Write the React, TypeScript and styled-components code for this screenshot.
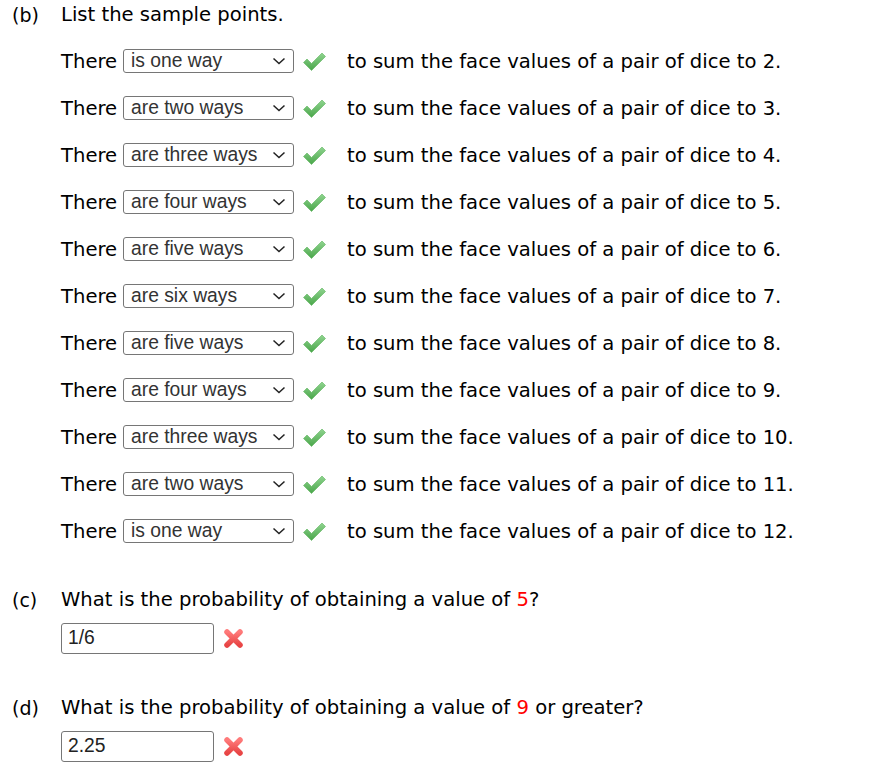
import styled, { createGlobalStyle } from "styled-components";

const GlobalStyle = createGlobalStyle`
    body {
        margin: 0;
        background: #ffffff;
        font-family: "DejaVu Sans", Verdana, sans-serif;
        color: #000000;
    }
`;

const Page = styled.div`
    padding: 1px 0 0 12px;
    width: 865px;
`;

const Part = styled.div<{ $top: number }>`
    display: flex;
    margin-top: ${(p) => p.$top}px;
`;

const PartLabel = styled.div`
    width: 49px;
    font-size: 19px;
    line-height: 28px;
    flex-shrink: 0;
`;

const PartBody = styled.div`
    display: flex;
    flex-direction: column;
`;

const Question = styled.div`
    font-size: 19.6px;
    line-height: 28px;
`;

const Red = styled.span`
    color: #ff0000;
`;

const RowList = styled.div`
    margin-top: 8.5px;
    display: flex;
    flex-direction: column;
`;

const Row = styled.div`
    height: 47px;
    display: flex;
    align-items: center;
    font-size: 19.6px;
`;

const Lead = styled.span`
    width: 62px;
`;

const SelectWrap = styled.div`
    position: relative;
    width: 171px;
    height: 24px;
`;

const Select = styled.select`
    appearance: none;
    width: 100%;
    height: 100%;
    box-sizing: border-box;
    border: 1px solid #767676;
    border-radius: 3px;
    background: #ffffff;
    padding: 0 0 0 7px;
    font-family: "Liberation Sans", Arial, sans-serif;
    font-size: 19.3px;
    color: #333333;
    line-height: 22px;
`;

const Chevron = styled.svg`
    position: absolute;
    right: 8px;
    top: 8px;
    pointer-events: none;
`;

const Trail = styled.span`
    margin-left: 21px;
`;

const AnswerRow = styled.div`
    margin-top: 9px;
    display: flex;
    align-items: center;
    gap: 9px;
`;

const Input = styled.input`
    width: 153px;
    height: 31px;
    box-sizing: border-box;
    border: 1px solid #767676;
    border-radius: 3px;
    padding: 0 0 0 6px;
    font-family: "Liberation Sans", Arial, sans-serif;
    font-size: 19.3px;
    color: #222222;
    outline: none;
`;

const Icon = styled.svg`
    flex-shrink: 0;
`;

const CheckMark = () => (
    <Icon width="23" height="19" viewBox="0 0 23 19" style={{ marginLeft: 9 }}>
        <defs>
            <linearGradient id="ck" x1="0" y1="0" x2="0" y2="1">
                <stop offset="0" stopColor="#8fd48f" />
                <stop offset="1" stopColor="#4aa64a" />
            </linearGradient>
        </defs>
        <path
            d="M0.5 10.5 L4 7 L8.5 11.5 L19 1 L22.5 4.5 L8.5 18.5 Z"
            fill="url(#ck)"
            stroke="#5cb35c"
            strokeWidth="0.6"
            strokeLinejoin="round"
        />
    </Icon>
);

const CrossMark = () => (
    <Icon width="21" height="21" viewBox="0 0 21 21">
        <defs>
            <linearGradient id="cx" x1="0" y1="0" x2="0" y2="1">
                <stop offset="0" stopColor="#ff7a7a" />
                <stop offset="1" stopColor="#e84545" />
            </linearGradient>
        </defs>
        <g stroke="url(#cx)" strokeWidth="5.5" strokeLinecap="round">
            <line x1="4" y1="4" x2="17" y2="17" />
            <line x1="17" y1="4" x2="4" y2="17" />
        </g>
    </Icon>
);

const answers = [
    "is one way",
    "are two ways",
    "are three ways",
    "are four ways",
    "are five ways",
    "are six ways",
    "are five ways",
    "are four ways",
    "are three ways",
    "are two ways",
    "is one way",
];

const options = ["is one way", "are two ways", "are three ways", "are four ways", "are five ways", "are six ways"];

export default function App() {
    return (
        <Page>
            <GlobalStyle />
            <Part $top={0}>
                <PartLabel>(b)</PartLabel>
                <PartBody>
                    <Question>List the sample points.</Question>
                    <RowList>
                        {answers.map((a, i) => (
                            <Row key={i}>
                                <Lead>There</Lead>
                                <SelectWrap>
                                    <Select defaultValue={a}>
                                        {options.map((o) => (
                                            <option key={o} value={o}>
                                                {o}
                                            </option>
                                        ))}
                                    </Select>
                                    <Chevron width="14" height="8" viewBox="0 0 14 8">
                                        <path d="M1.5 1.5 L7 6.5 L12.5 1.5" fill="none" stroke="#222" strokeWidth="1.5" />
                                    </Chevron>
                                </SelectWrap>
                                <CheckMark />
                                <Trail>to sum the face values of a pair of dice to {i + 2}.</Trail>
                            </Row>
                        ))}
                    </RowList>
                </PartBody>
            </Part>
            <Part $top={31}>
                <PartLabel>(c)</PartLabel>
                <PartBody>
                    <Question>
                        What is the probability of obtaining a value of <Red>5</Red>?
                    </Question>
                    <AnswerRow>
                        <Input defaultValue="1/6" />
                        <CrossMark />
                    </AnswerRow>
                </PartBody>
            </Part>
            <Part $top={40}>
                <PartLabel>(d)</PartLabel>
                <PartBody>
                    <Question>
                        What is the probability of obtaining a value of <Red>9</Red> or greater?
                    </Question>
                    <AnswerRow>
                        <Input defaultValue="2.25" />
                        <CrossMark />
                    </AnswerRow>
                </PartBody>
            </Part>
        </Page>
    );
}
